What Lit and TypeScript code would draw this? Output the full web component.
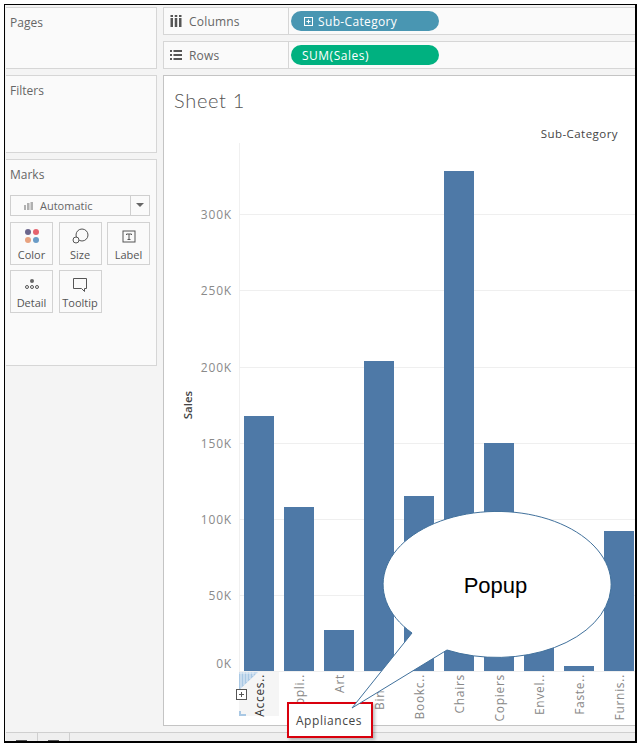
import { LitElement, html, css, svg } from "lit";
import { customElement } from "lit/decorators.js";

const BASE = 671;
const BARS: [string, number, boolean?][] = [
  ["Acces..", 416, true], ["Appli..", 507], ["Art", 630], ["Bind..", 361], ["Bookc..", 496],
  ["Chairs", 171], ["Copiers", 443], ["Envel..", 540], ["Faste..", 666], ["Furnis..", 531],
];
const TICKS: [string, number, number][] = [
  ["300K", 214, 5], ["250K", 290, 5], ["200K", 367, 5], ["150K", 443, 5], ["100K", 519, 5], ["50K", 595, 5], ["0K", 671, -3],
];

@customElement("app-root")
export class AppRoot extends LitElement {
  static styles = css`
    :host { display: block; width: 641px; height: 746px; background: #fff; font-family: "Open Sans", "Liberation Sans", sans-serif; color: #555; overflow: hidden; }
    * { box-sizing: border-box; }
    .frame { position: relative; margin: 4px 4px 0 4px; width: 633px; height: 739px; border: solid #000; border-width: 1px 2px 2px 1px; padding: 1px 0 0 1px; background: #f4f4f4; display: flex; flex-direction: column; overflow: hidden; }
    .main { flex: 1; display: grid; grid-template-columns: 151px 1fr; column-gap: 6px; padding-top: 1px; min-height: 0; }
    .side { display: flex; flex-direction: column; }
    .panel { background: #fafafa; border: 1px solid #d6d6d6; border-left: none; padding: 7px 0 0 4px; font-size: 12px; line-height: 16px; color: #666; }
    .pages { height: 62px; margin-bottom: 6px; }
    .filters { height: 78px; margin-bottom: 6px; }
    .marks { height: 207px; }
    .dropdown { margin-top: 12px; width: 140px; height: 21px; border: 1px solid #cfcfcf; background: #fafafa; display: flex; align-items: center; font-size: 11px; color: #666; }
    .dd-main { flex: 1; display: flex; align-items: center; gap: 6px; padding-left: 12px; height: 100%; border-right: 1px solid #cfcfcf; }
    .dd-arrow { width: 18px; display: flex; justify-content: center; }
    .cards { display: grid; grid-template-columns: repeat(3, 43px); grid-auto-rows: 43px; gap: 5px 5.5px; margin-top: 6px; }
    .card { border: 1px solid #d2d2d2; background: #fafafa; display: flex; flex-direction: column; align-items: center; font-size: 11px; line-height: 14px; color: #555; padding-top: 5px; white-space: nowrap; }
    .card svg { display: block; height: 18px; margin-bottom: 2px; }
    .right { display: flex; flex-direction: column; min-width: 0; }
    .shelf { height: 28px; margin-bottom: 6px; background: #fafafa; border: 1px solid #d6d6d6; border-right: none; display: flex; align-items: center; font-size: 12px; color: #666; }
    .shelf-label { width: 125px; height: 100%; border-right: 1px solid #d6d6d6; display: flex; align-items: center; gap: 7px; padding-left: 6px; letter-spacing: .2px; }
    .pill { margin-left: 2px; width: 148px; height: 20px; border-radius: 10px; color: #fff; font-size: 12px; letter-spacing: .35px; display: flex; align-items: center; gap: 4px; padding-left: 12px; }
    .pill.blue { background: #4996b2; }
    .pill.green { background: #00b180; padding-left: 11px; letter-spacing: .5px; }
    .sheet { height: 651px; background: #fff; border: 1px solid #c4c4c4; border-right: none; position: relative; }
    .chart { position: absolute; left: -164px; top: -76px; width: 641px; height: 746px; }
    .chart text { font-family: "Open Sans", "Liberation Sans", sans-serif; }
    .title { position: absolute; left: 10px; top: 10px; font-family: Lato, "Open Sans", sans-serif; font-weight: 300; font-size: 20px; line-height: 28px; color: #555; letter-spacing: 0.7px; }
    .bottom { height: 9px; margin-top: 6px; border-top: 1px solid #cfcfcf; background: #efefef; display: flex; flex: none; }
    .tab { width: 32px; border-right: 1px solid #cfcfcf; display: flex; justify-content: center; align-items: flex-end; }
    .tab i { display: block; width: 11px; height: 1px; background: #555; }
    .callout { position: absolute; left: -5px; top: -5px; width: 641px; height: 746px; pointer-events: none; }
    .callout text { font-family: "Liberation Sans", Arial, sans-serif; }
    .tip { position: absolute; left: 282px; top: 697px; width: 86px; height: 36px; background: #fff; border: 2.5px solid #d9000d; box-shadow: 2px 2px 3px rgba(0,0,0,.25); font-size: 12px; color: #444; display: flex; align-items: center; justify-content: center; padding: 1px 2px 0 0; letter-spacing: .55px; }
  `;

  private chart() {
    return html`<svg class="chart" viewBox="0 0 641 746">
      <rect x="239" y="671" width="40" height="45" fill="#f5f5f5"></rect>
      <line x1="239.5" y1="143" x2="239.5" y2="671" stroke="#f0f0f0"></line>
      ${TICKS.map(([t, y, dy]) => svg`
        <line x1="239" y1=${y + 0.5} x2="640" y2=${y + 0.5} stroke="#efefef"></line>
        <text x="232" y=${y + dy} text-anchor="end" font-size="12" letter-spacing=".8" fill="#8a8a8a">${t}</text>`)}
      <text transform="translate(192 405) rotate(-90)" text-anchor="middle" font-size="11.5" font-weight="600" fill="#444">Sales</text>
      <text x="618" y="138" text-anchor="end" font-size="11.5" fill="#444" letter-spacing=".45">Sub-Category</text>
      ${BARS.map(([name, top, sel], i) => {
        const x = 244 + i * 40;
        return svg`
          <rect x=${x} y=${top} width="30" height=${BASE - top} fill="#4e79a7"></rect>
          <text transform="translate(${x + 20} 674) rotate(-90)" text-anchor="end" font-size="12" letter-spacing=".7" fill=${sel ? "#333" : "#888"}>${name}</text>`;
      })}
      <polygon points="239,672 258,672 239,690" fill="#a9c8e4"></polygon>
      <path d="M239 673h19M241 672v16M244 672v13M247 672v10M250 672v7M253 672v4" stroke="#e8f0f8" stroke-width="1" fill="none"></path>
      <path d="M239 716v-5h2v3h5v2z" fill="#a9c8e4"></path>
      <rect x="236.5" y="689.5" width="10" height="10" fill="#fff" stroke="#555"></rect>
      <path d="M239 694.5h5M241.5 692v5" stroke="#555"></path>
    </svg>`;
  }

  render() {
    return html`<div class="frame">
      <div class="main">
        <div class="side">
          <div class="panel pages">Pages</div>
          <div class="panel filters">Filters</div>
          <div class="panel marks">Marks
            <div class="dropdown">
              <div class="dd-main">
                <svg width="11" height="10" viewBox="0 0 11 10"><path d="M1 4h2v5H1zM4 2h2.500v7H4zM7.500 1H10v8H7.500z" fill="#b0b0b0"></path></svg>
                Automatic
              </div>
              <div class="dd-arrow"><svg width="8" height="5" viewBox="0 0 8 5"><path d="M0 0h8L4 4z" fill="#666"></path></svg></div>
            </div>
            <div class="cards">
              <div class="card"><svg width="18" height="18" viewBox="0 0 18 18">
                <circle cx="5" cy="4" r="3" fill="#6b668c"></circle><circle cx="13" cy="4" r="3" fill="#e5636e"></circle>
                <circle cx="5" cy="12" r="3" fill="#e8a27f"></circle><circle cx="13" cy="12" r="3" fill="#6a9cc7"></circle></svg>Color</div>
              <div class="card"><svg width="18" height="18" viewBox="0 0 18 18" fill="none" stroke="#555">
                <circle cx="11" cy="7" r="6"></circle><circle cx="5" cy="12" r="3" fill="#fafafa"></circle></svg>Size</div>
              <div class="card"><svg width="14" height="18" viewBox="0 0 14 18" fill="none" stroke="#555">
                <rect x="1" y="3" width="12" height="11"></rect><path d="M4.500 7V6h5v1M7 6v5.500M5.500 11.500h3"></path></svg>Label</div>
              <div class="card"><svg width="16" height="18" viewBox="0 0 16 18" fill="none" stroke="#555">
                <circle cx="8" cy="5" r="2" fill="#666" stroke="none"></circle>
                <circle cx="3" cy="11" r="1.500"></circle><circle cx="8" cy="11" r="1.500"></circle><circle cx="13" cy="11" r="1.500"></circle></svg>Detail</div>
              <div class="card"><svg width="16" height="18" viewBox="0 0 16 18" fill="none" stroke="#555">
                <path d="M1.500 2.500h13v10h-2v3l-3-3h-8z"></path></svg>Tooltip</div>
            </div>
          </div>
        </div>
        <div class="right">
          <div class="shelf">
            <div class="shelf-label">
              <svg width="12" height="12" viewBox="0 0 12 12"><path d="M.5 3H3v9H.5zM4.750 3h2.500v9h-2.500zM9 3h2.500v9H9zM.5 0H3v2H.5zM4.750 0h2.500v2h-2.500zM9 0h2.500v2H9z" fill="#555"></path></svg>
              Columns
            </div>
            <div class="pill blue">
              <svg width="11" height="11" viewBox="0 0 11 11" fill="none" stroke="#fff"><rect x="1.500" y="1.500" width="8" height="8"></rect><path d="M3.500 5.500h4M5.500 3.500v4"></path></svg>
              Sub-Category
            </div>
          </div>
          <div class="shelf">
            <div class="shelf-label">
              <svg width="12" height="10" viewBox="0 0 12 10" fill="#555"><path d="M0 0h2v2H0zM0 4h2v2H0zM0 8h2v2H0zM3.500 0H12v2H3.500zM3.500 4H12v2H3.500zM3.500 8H12v2H3.500z"></path></svg>
              Rows
            </div>
            <div class="pill green">SUM(Sales)</div>
          </div>
          <div class="sheet">
            ${this.chart()}
            <div class="title">Sheet 1</div>
          </div>
        </div>
      </div>
      <div class="bottom"><div class="tab"><i></i></div><div class="tab"><i></i></div></div>
      <div class="tip">Appliances</div>
      <svg class="callout" viewBox="0 0 641 746">
        <path d="M447 650 L352 708 L412 633 A114 73 0 1 1 447 650 Z" fill="#fff" stroke="#41719c" stroke-width="1"></path>
        <text x="495.500" y="593" text-anchor="middle" font-size="22" fill="#000">Popup</text>
      </svg>
    </div>`;
  }
}
